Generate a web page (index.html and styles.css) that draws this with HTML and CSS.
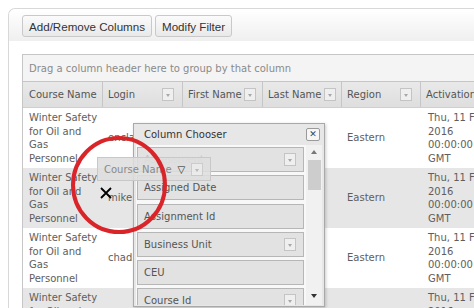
FILE: index.html
```html
<!DOCTYPE html>
<html>
<head>
<meta charset="utf-8">
<link rel="stylesheet" href="styles.css">
</head>
<body>
<div class="panel">
  <div class="toolbar">
    <button class="btn">Add/Remove Columns</button>
    <button class="btn">Modify Filter</button>
  </div>
  <div class="grid">
    <div class="group-bar">Drag a column header here to group by that column</div>
    <div class="row head">
      <div class="hc"><span>Course Name</span></div>
      <div class="hc"><span>Login</span><i class="fi"></i></div>
      <div class="hc"><span>First Name</span><i class="fi"></i></div>
      <div class="hc"><span>Last Name</span><i class="fi"></i></div>
      <div class="hc"><span>Region</span><i class="fi"></i></div>
      <div class="hc"><span>Activation Date</span></div>
    </div>
    <div class="row">
      <div class="c first">Winter Safety for Oil and Gas Personnel</div>
      <div class="c">enclave</div>
      <div class="c">Eric</div>
      <div class="c">Baker</div>
      <div class="c">Eastern</div>
      <div class="c date">Thu, 11 Feb 2016 00:00:00 GMT</div>
    </div>
    <div class="row alt">
      <div class="c first">Winter Safety for Oil and Gas Personnel</div>
      <div class="c">mike</div>
      <div class="c">Mike</div>
      <div class="c">Jones</div>
      <div class="c">Eastern</div>
      <div class="c date">Thu, 11 Feb 2016 00:00:00 GMT</div>
    </div>
    <div class="row">
      <div class="c first">Winter Safety for Oil and Gas Personnel</div>
      <div class="c">chad</div>
      <div class="c">Chad</div>
      <div class="c">Smith</div>
      <div class="c">Eastern</div>
      <div class="c date">Thu, 11 Feb 2016 00:00:00 GMT</div>
    </div>
    <div class="row alt">
      <div class="c first">Winter Safety for Oil and Gas Personnel</div>
      <div class="c">dan</div>
      <div class="c">Dan</div>
      <div class="c">Brown</div>
      <div class="c">Eastern</div>
      <div class="c date">Thu, 11 Feb 2016 00:00:00 GMT</div>
    </div>
  </div>
</div>

<div class="chooser">
  <div class="ch-title"><span>Column Chooser</span><span class="close">&#x2715;</span></div>
  <div class="ch-body">
    <div class="ch-list">
      <div class="item faded"><span>Assessment</span><i class="fi"></i></div>
      <div class="item"><span>Assigned Date</span></div>
      <div class="item"><span>Assignment Id</span></div>
      <div class="item"><span>Business Unit</span><i class="fi"></i></div>
      <div class="item"><span>CEU</span></div>
      <div class="item"><span>Course Id</span><i class="fi"></i></div>
    </div>
    <div class="scroll">
      <span class="arr up"></span>
      <span class="thumb"></span>
      <span class="arr down"></span>
    </div>
  </div>
</div>

<div class="ghost"><span>Course Name</span><span class="tri">&#x25BD;</span><i class="fi"></i></div>

<svg class="ring" width="110" height="110" viewBox="0 0 110 110">
  <ellipse cx="55" cy="55" rx="46" ry="47" fill="none" stroke="#d9252a" stroke-width="4"/>
</svg>

<svg class="cursor" width="12" height="12" viewBox="0 0 12 12">
  <path d="M1 1 L11 11 M11 1 L1 11" stroke="#000" stroke-width="1.8" fill="none"/>
</svg>
</body>
</html>
```

FILE: styles.css
```css
* { box-sizing: border-box; }
html, body { margin: 0; padding: 0; }
body {
  width: 474px;
  height: 308px;
  overflow: hidden;
  background: #fff;
  font-family: "DejaVu Sans", sans-serif;
  font-size: 10px;
  color: #5a5a5a;
  position: relative;
}
.panel {
  margin: 8px 0 0 8px;
  width: 620px;
  height: 340px;
  border: 1px solid #d8d8d8;
  border-right: none;
  border-radius: 7px 0 0 0;
  background: #fff;
}
.toolbar {
  height: 32px;
  padding: 6px 13px 0;
  display: flex;
  gap: 3px;
  background: linear-gradient(#ffffff, #efefef);
  border-radius: 7px 0 0 0;
}
.btn {
  height: 22px;
  padding: 0 6px;
  font-family: "Liberation Sans", Arial, sans-serif;
  font-size: 11.6px;
  color: #333;
  background: linear-gradient(#fbfbfb, #e9e9e9);
  border: 1px solid #c9c9c9;
  border-radius: 3px;
  margin: 0;
}
.grid {
  margin: 13px 0 0 13px;
  border: 1px solid #c6c6c6;
  border-right: none;
}
.group-bar {
  height: 27px;
  padding: 0 6px;
  display: flex;
  align-items: center;
  color: #8a8a8a;
  background: #f4f4f4;
  border-bottom: 1px solid #c6c6c6;
}
.row {
  display: grid;
  grid-template-columns: 80px 80px 80px 79px 79px 80px;
  height: 60px;
  background: #fff;
}
.row.alt { background: #e6e6e6; }
.row.head {
  height: 26px;
  background: linear-gradient(#e9e9e9, #dedede);
  border-bottom: 1px solid #cfcfcf;
}
.hc {
  display: flex;
  align-items: center;
  justify-content: space-between;
  padding: 0 8px 0 5px;
  border-right: 1px solid #c6c6c6;
  color: #555;
  white-space: nowrap;
  gap: 2px;
}
.hc:first-child { padding-left: 6px; }
.hc:last-child { overflow: visible; }
.fi {
  flex: none;
  display: inline-block;
  width: 12px;
  height: 13px;
  border: 1px solid #c4c4c4;
  background: #efefef;
  position: relative;
}
.fi::after {
  content: "";
  position: absolute;
  left: 3px;
  top: 5px;
  border-left: 2.5px solid transparent;
  border-right: 2.5px solid transparent;
  border-top: 3px solid #a8a8a8;
}
.c {
  display: flex;
  align-items: center;
  padding: 0 4px 0 5px;
  line-height: 13.5px;
  color: #5e5e5e;
  overflow: hidden;
}
.c.first { padding-left: 6px; padding-right: 4px; }
.c.date { padding-left: 7px; padding-right: 12px; overflow: visible; }

.chooser {
  position: absolute;
  left: 133px;
  top: 123px;
  width: 192px;
  height: 184px;
  border: 1px solid #a9a9a9;
  background: #e7e7e7;
  box-shadow: 1px 1px 3px rgba(0,0,0,0.2);
}
.ch-title {
  height: 21px;
  display: flex;
  align-items: center;
  justify-content: space-between;
  padding: 0 4px 0 10px;
  color: #333;
}
.close {
  width: 14px;
  height: 13px;
  border: 1px solid #9a9a9a;
  background: #f6f6f6;
  border-radius: 2px;
  font-size: 9px;
  line-height: 11px;
  text-align: center;
  color: #444;
  margin-top: -1px;
}
.ch-body {
  margin: 0 2px;
  height: 160px;
  background: #f8f8f8;
  display: flex;
  overflow: hidden;
}
.ch-list {
  width: 170px;
  padding: 2px 0 0 1px;
  display: flex;
  flex-direction: column;
  gap: 3.3px;
}
.item {
  flex: none;
  height: 25px;
  border: 1px solid #b6b6b6;
  background: #e2e2e2;
  display: flex;
  align-items: center;
  justify-content: space-between;
  padding: 0 7px 0 6px;
  color: #555;
}
.item.faded span { color: #c4c4c4; }
.scroll {
  width: 16px;
  margin-left: 2px;
  position: relative;
  background: #f1f1f1;
}
.thumb {
  position: absolute;
  left: 2px;
  top: 15px;
  width: 13px;
  height: 30px;
  background: #cdcdcd;
}
.arr {
  position: absolute;
  left: 5px;
  border-left: 3.5px solid transparent;
  border-right: 3.5px solid transparent;
}
.arr.up { top: 5px; border-bottom: 4px solid #777; }
.arr.down { top: 149px; border-top: 4px solid #333; }

.ghost {
  position: absolute;
  left: 97px;
  top: 157px;
  width: 114px;
  height: 24px;
  border: 1px solid #c8c8c8;
  background: rgba(222,222,222,0.88);
  display: flex;
  align-items: center;
  padding-left: 6px;
  color: #8a8a8a;
  white-space: nowrap;
}
.ghost .tri {
  color: #222;
  font-size: 10px;
  margin-left: 6px;
  margin-right: 6px;
}
.ghost .fi { opacity: 0.7; }
.ring {
  position: absolute;
  left: 64px;
  top: 130px;
}
.cursor {
  position: absolute;
  left: 100px;
  top: 187px;
}
```
